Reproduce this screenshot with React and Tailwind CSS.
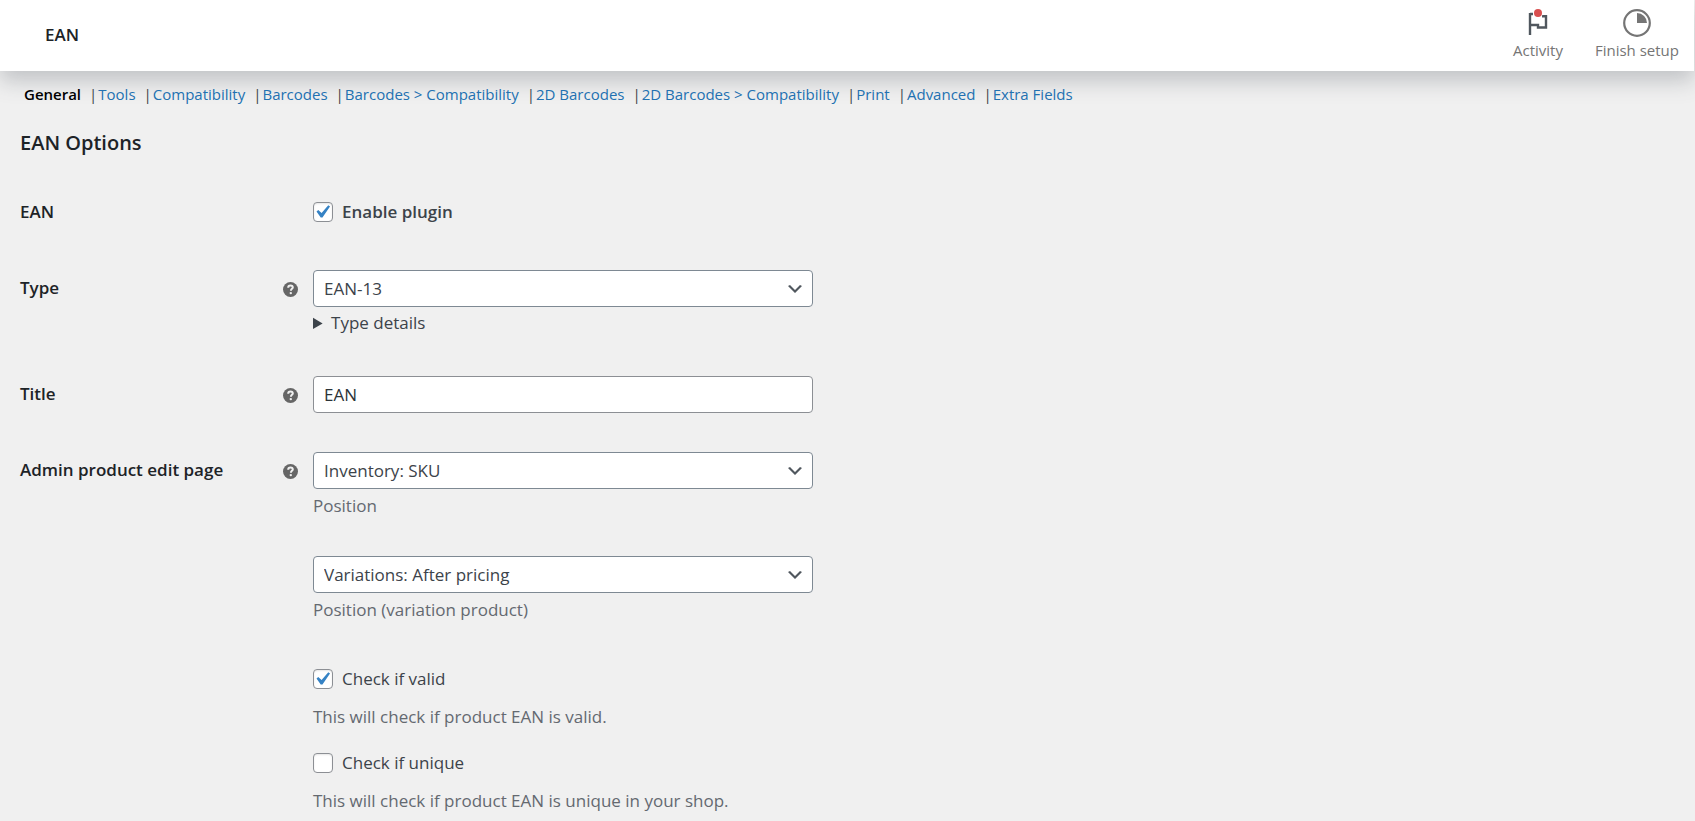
import React from 'react';

const TABS = ['Tools', 'Compatibility', 'Barcodes', 'Barcodes > Compatibility', '2D Barcodes', '2D Barcodes > Compatibility', 'Print', 'Advanced', 'Extra Fields'];

const FlagIcon = () => (
  <svg viewBox="0 0 28 28" className="w-7 h-7" fill="none" stroke="#50575e" strokeWidth="2.4">
    <path d="M6 26V4" />
    <path d="M6 5h3M6 16h8v2.5h8V7.2h-4" />
    <circle cx="14" cy="3.8" r="5" fill="#fff" stroke="none" />
    <circle cx="14" cy="4" r="4" fill="#d94f4f" stroke="none" />
  </svg>
);

const ProgressIcon = () => (
  <svg viewBox="0 0 28 28" className="w-7 h-7">
    <circle cx="14" cy="14" r="12.8" fill="none" stroke="#757575" strokeWidth="2.2" />
    <path d="M14 14V4a10 10 0 0 1 10 10z" fill="#757575" />
  </svg>
);

const HelpTip = () => (
  <button type="button" aria-label="Help" className="w-[15px] h-[15px]">
    <svg viewBox="0 0 15 15" className="w-full h-full">
      <circle cx="7.5" cy="7.5" r="7.5" fill="#666" />
      <path d="M5.2 5.8C5.2 4.2 6.2 3.5 7.5 3.5s2.3.8 2.3 1.9c0 1.4-1.9 1.5-1.9 3.3" fill="none" stroke="#f0f0f0" strokeWidth="2" />
      <circle cx="7.8" cy="11.1" r="1.2" fill="#f0f0f0" />
    </svg>
  </button>
);

const Row = ({ label, htmlFor, tip, children }) => (
  <div className="grid grid-cols-[263px_30px_minmax(0,1fr)] py-[19px]">
    <label htmlFor={htmlFor} className="font-semibold text-[#1d2327] leading-[35px]">{label}</label>
    <div className="h-[38px] flex items-center">{tip && <HelpTip />}</div>
    <div>{children}</div>
  </div>
);

const Select = ({ id, value, label }) => (
  <div className="relative max-w-[500px]">
    <select id={id} aria-label={label} defaultValue={value} className="appearance-none block w-full h-[37px] pl-[10px] pr-8 bg-white border border-[#7e8993] rounded text-[#3c434a]">
      <option>{value}</option>
    </select>
    <svg viewBox="0 0 20 20" className="absolute right-2 top-[9px] w-5 h-5 pointer-events-none">
      <path d="m5 6 5 5 5-5 2 1-7 7-7-7z" fill="#50575e" />
    </svg>
  </div>
);

const Checkbox = ({ id, label, checked, className = '' }) => (
  <label htmlFor={id} className={`relative flex items-center gap-[9px] h-6 ${className}`}>
    <input id={id} type="checkbox" defaultChecked={checked} className="peer appearance-none w-5 h-5 bg-white border border-[#8c8f94] rounded shadow-[inset_0_1px_2px_rgba(0,0,0,0.1)]" />
    <svg viewBox="0 0 20 20" className="absolute left-[-4px] top-[-1px] w-[26px] h-[26px] pointer-events-none hidden peer-checked:block">
      <path d="M14.83 4.89l1.34.94-5.81 8.38H9.02L5.78 9.67l1.34-1.25 2.57 2.4z" fill="#3582c4" />
    </svg>
    {label}
  </label>
);

export default function App() {
  return (
    <div className="min-h-screen bg-[#f0f0f0] font-['Open_Sans','Noto_Sans',sans-serif] text-[17px] leading-6 text-[#3c434a]">
      {/* Header */}
      <header className="h-[71px] mr-px pl-[45px] pr-[15px] bg-white flex items-center justify-between shadow-[0_10px_20px_0_rgba(85,93,102,0.3)]">
        <h1 className="pb-[2px] font-semibold text-[#1d2327]">EAN</h1>
        <div className="flex gap-8 text-[15px] text-[#757575]">
          <button type="button" className="flex flex-col items-center gap-px"><FlagIcon />Activity</button>
          <button type="button" className="flex flex-col items-center gap-px"><ProgressIcon />Finish setup</button>
        </div>
      </header>

      {/* Tabs */}
      <nav className="flex flex-wrap pt-[11px] px-6 text-[15px]">
        <a href="#general" className="font-semibold text-black">General</a>
        {TABS.map((tab) => (
          <span key={tab} className="ml-2">|<a href="#tab" className="ml-px text-[#2271b1]">{tab}</a></span>
        ))}
      </nav>

      <main className="px-5 pt-[23px]">
        <h2 className="text-xl leading-7 font-semibold text-[#1d2327]">EAN Options</h2>

        <form className="pt-[18px]">
          <Row label="EAN" htmlFor="enable">
            <Checkbox id="enable" label="Enable plugin" checked className="mt-[6px] mb-[7px] font-semibold" />
          </Row>

          <Row label="Type" htmlFor="type" tip>
            <Select id="type" value="EAN-13" />
            <details className="mt-1 pb-[3px]">
              <summary>Type details</summary>
            </details>
          </Row>

          <Row label="Title" htmlFor="title" tip>
            <input id="title" type="text" defaultValue="EAN" className="block w-full max-w-[500px] h-[37px] px-[10px] bg-white border border-[#8c8f94] rounded text-[#2c3338]" />
          </Row>

          <Row label="Admin product edit page" htmlFor="position" tip>
            <Select id="position" value="Inventory: SKU" />
            <p className="mt-[5px] mb-[38px] text-[#646970]">Position</p>
            <Select id="variation" value="Variations: After pricing" label="Position (variation product)" />
            <p className="mt-[5px] mb-[45px] text-[#646970]">Position (variation product)</p>
            <Checkbox id="valid" label="Check if valid" checked />
            <p className="mt-[14px] mb-[22px] text-[#646970]">This will check if product EAN is valid.</p>
            <Checkbox id="unique" label="Check if unique" />
            <p className="mt-[14px] text-[#646970]">This will check if product EAN is unique in your shop.</p>
          </Row>
        </form>
      </main>
    </div>
  );
}
